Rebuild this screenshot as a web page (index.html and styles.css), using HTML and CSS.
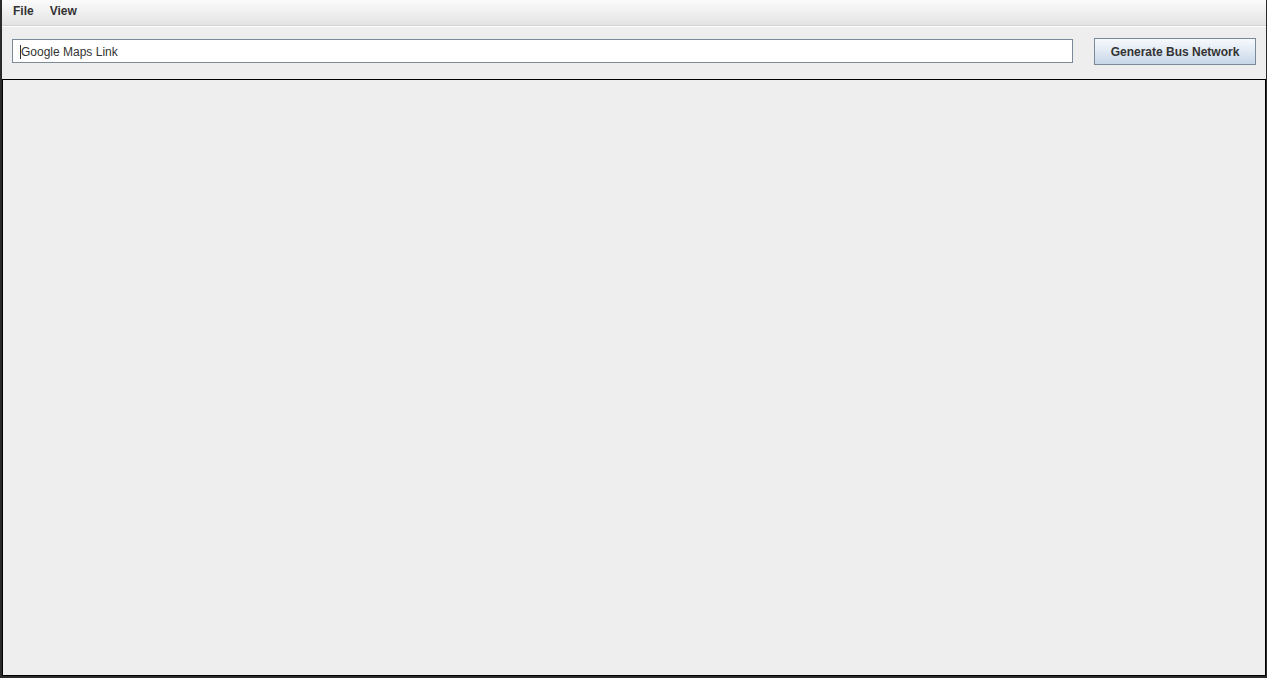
FILE: index.html
```html
<!DOCTYPE html>
<html>
<head>
<meta charset="utf-8">
<title>Bus Network</title>
<link rel="stylesheet" href="styles.css">
</head>
<body>
<div class="window">
  <div class="menubar">
    <span class="menu">File</span>
    <span class="menu">View</span>
  </div>
  <div class="toolbar">
    <div class="field"><span class="caret"></span><span class="field-text">Google Maps Link</span></div>
    <button class="btn">Generate Bus Network</button>
  </div>
  <div class="panel"></div>
</div>
</body>
</html>
```
FILE: styles.css
```css
html, body {
  margin: 0;
  padding: 0;
  background: #2a2a2a;
  width: 1267px;
  height: 678px;
  overflow: hidden;
}
.window {
  margin-left: 2px;
  width: 1264px;
  height: 676px;
  background: #eeeeee;
  display: flex;
  flex-direction: column;
  font-family: "Liberation Sans", Arial, sans-serif;
  font-size: 12px;
  color: #333333;
}
.menubar {
  height: 26px;
  box-sizing: border-box;
  border-bottom: 1px solid #d2d2d2;
  background: linear-gradient(to bottom, #fbfbfb 0%, #f2f2f2 40%, #e3e3e3 100%);
  display: flex;
  align-items: center;
  padding-left: 11px;
  gap: 16px;
  padding-bottom: 3px;
}
.menu {
  font-weight: bold;
  color: #333333;
}
.toolbar {
  height: 53px;
  box-sizing: border-box;
  display: flex;
  align-items: flex-start;
  padding: 12px 10px 0 10px;
  border-top: 1px solid #ffffff;
}
.field {
  width: 1061px;
  height: 24px;
  box-sizing: border-box;
  border: 1px solid #7a8a99;
  background: #ffffff;
  display: flex;
  align-items: center;
  padding-left: 7px;
  padding-top: 2px;
}
.caret {
  width: 1px;
  height: 14px;
  background: #333333;
}
.field-text {
  color: #333333;
}
.btn {
  margin-left: auto;
  margin-top: -1px;
  width: 162px;
  height: 27px;
  box-sizing: border-box;
  border: 1px solid #7a8a99;
  background: linear-gradient(to bottom, #f7f9fc 0%, #e3ebf4 45%, #c6d7e9 100%);
  font-family: "Liberation Sans", Arial, sans-serif;
  font-size: 12px;
  font-weight: bold;
  color: #333333;
  padding: 0;
}
.panel {
  flex: 1;
  border: 1px solid #000000;
  background: #eeeeee;
}
```
